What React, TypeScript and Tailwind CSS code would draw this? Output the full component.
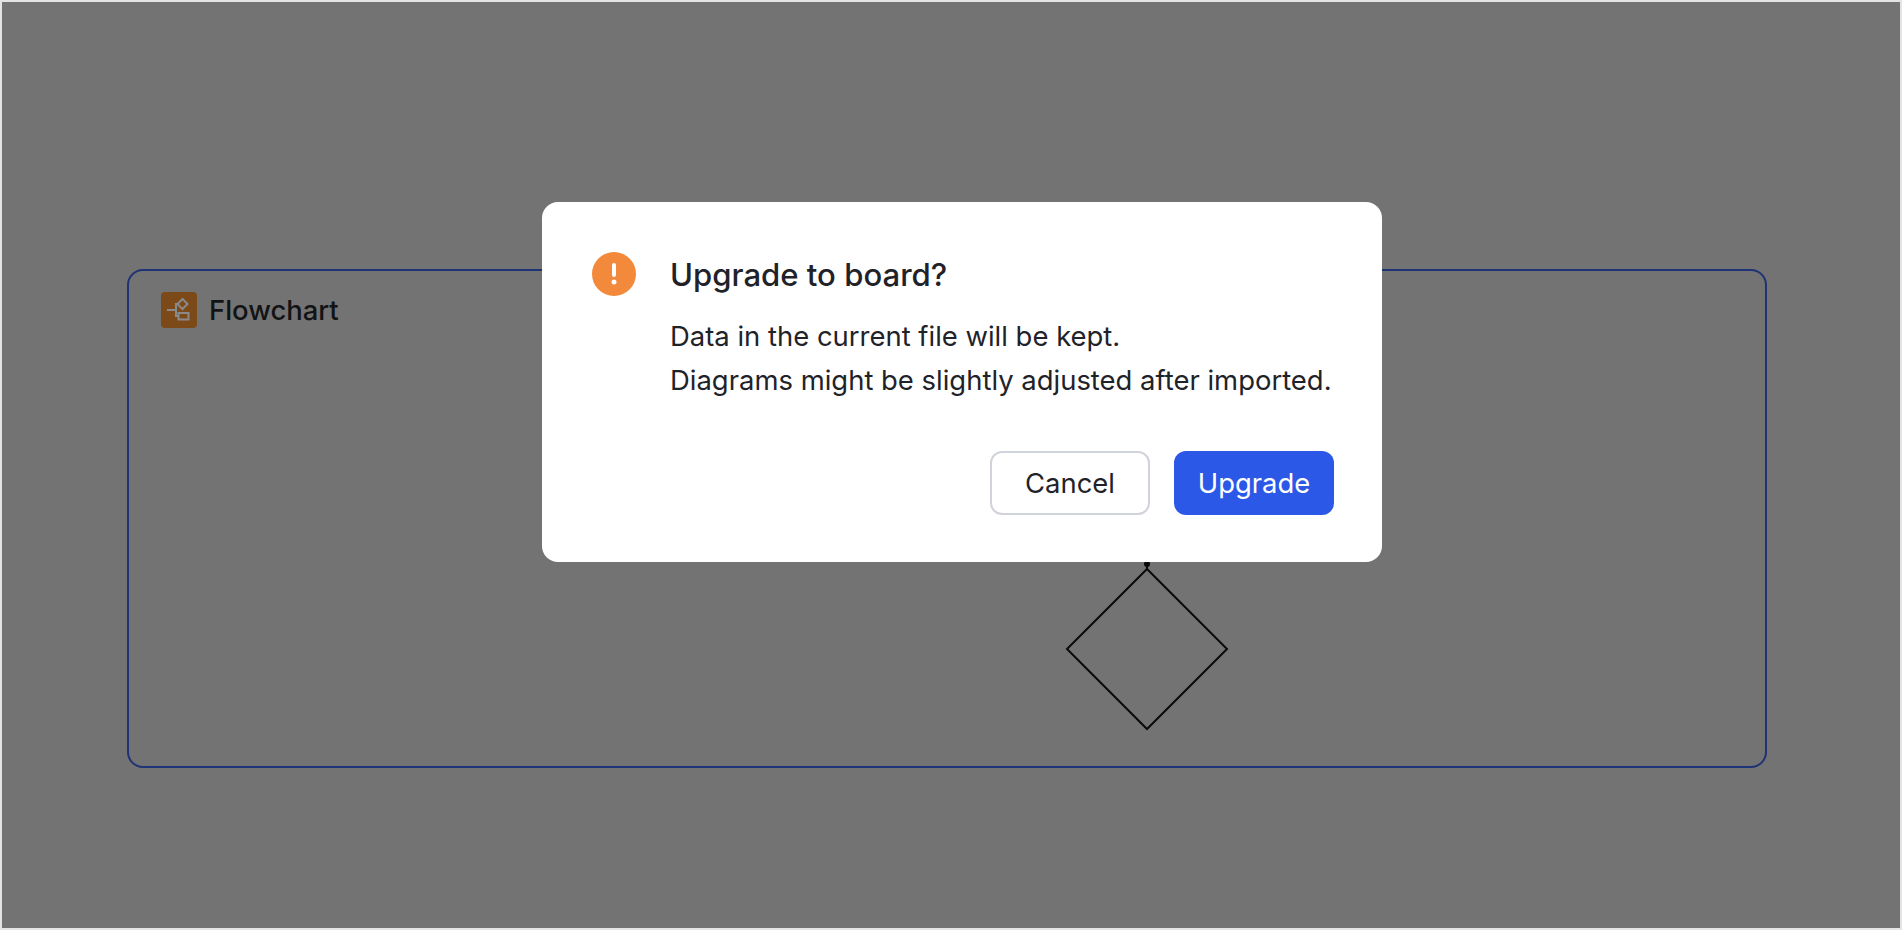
const FlowchartIcon = () => (
  <div className="flex h-9 w-9 items-center justify-center rounded-[4px] bg-[#7c4919]">
    <svg width="24" height="24" viewBox="0 0 24 24" fill="none" stroke="#8a8a8a" strokeWidth="2">
      <path d="M15.500 1L20.500 6L15.500 11L10.500 6Z" />
      <rect x="11.500" y="15" width="10" height="6.500" />
      <path d="M0 12H9M10.500 6H9V18H11.500" />
    </svg>
  </div>
);

const Diagram = () => (
  <div className="relative ml-[127px] mt-[269px] h-[499px] w-[1640px] rounded-[16px] border-2 border-[#1e3276]">
    <div className="flex items-center gap-3 pl-[32px] pt-[20px]">
      <FlowchartIcon />
      <span className="pt-[1px] text-[27.4px] font-medium leading-9 text-[#111315]">Flowchart</span>
    </div>
    <svg className="absolute left-[933px] top-[286px]" width="170" height="175" viewBox="0 0 170 175" fill="none">
      <path d="M85 12L165 92L85 172L5 92Z" stroke="#0a0a0a" strokeWidth="2" />
      <circle cx="85" cy="7" r="3" fill="#0a0a0a" />
      <path d="M85 7V12" stroke="#0a0a0a" strokeWidth="2" />
    </svg>
  </div>
);

const UpgradeDialog = () => (
  <div className="absolute inset-0 flex items-start pl-[540px] pt-[200px]">
    <div className="h-[360px] w-[840px] rounded-[16px] bg-white pl-[50px] pr-[48px] pt-[50px]">
      <div className="flex gap-[34px]">
        <div className="flex h-11 w-11 shrink-0 items-center justify-center rounded-full bg-[#f3893b]">
          <svg width="6" height="24" viewBox="0 0 6 24" fill="white">
            <rect x="1" y="1" width="4" height="14" rx="2" />
            <circle cx="3" cy="20" r="2.500" />
          </svg>
        </div>
        <div className="min-w-0 flex-1">
          <h2 className="pt-[1px] text-[31.1px] font-medium leading-11 text-[#1f2329]">Upgrade to board?</h2>
          <p className="mt-[17px] text-[27.45px] leading-[44px] text-[#1f2329]">
            Data in the current file will be kept.
            <br />
            Diagrams might be slightly adjusted after imported.
          </p>
        </div>
      </div>
      <div className="mt-[49px] flex justify-end gap-6">
        <button className="h-[64px] w-[160px] rounded-[12px] border-2 border-[#d0d3d9] bg-white pt-[1px] text-[27.4px] text-[#1f2329]">
          Cancel
        </button>
        <button className="h-[64px] w-[160px] rounded-[12px] bg-[#2c58e8] pt-[1px] text-[27.4px] text-white">
          Upgrade
        </button>
      </div>
    </div>
  </div>
);

export default function App() {
  return (
    <div className="relative h-[930px] w-[1902px] overflow-hidden border-2 border-[#e4e4e4] bg-[#737373] font-['Inter',sans-serif]">
      <div className="-ml-[2px] -mt-[2px] flow-root">
        <Diagram />
      </div>
      <UpgradeDialog />
    </div>
  );
}
